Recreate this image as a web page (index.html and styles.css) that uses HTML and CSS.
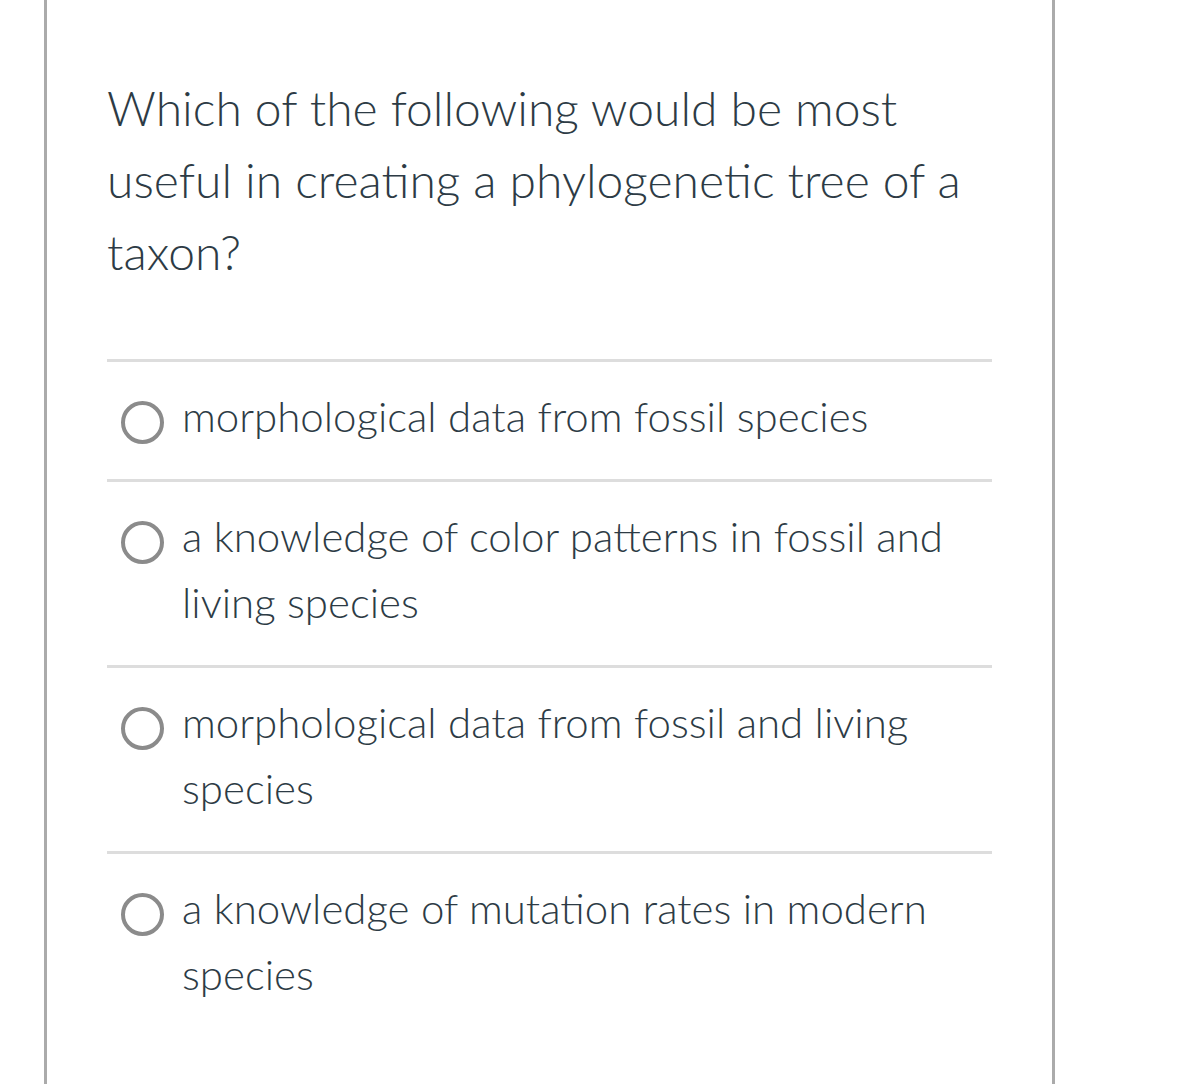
FILE: index.html
```html
<!DOCTYPE html>
<html lang="en">
<head>
<meta charset="utf-8">
<link rel="stylesheet" href="styles.css">
</head>
<body>
<div class="card">
  <div class="question">Which of the following would be most useful in creating a phylogenetic tree of a taxon?</div>
  <div class="answers">
    <div class="answer"><span class="radio"></span><span class="label">morphological data from fossil species</span></div>
    <div class="answer"><span class="radio"></span><span class="label">a knowledge of color patterns in fossil and living species</span></div>
    <div class="answer"><span class="radio"></span><span class="label">morphological data from fossil and living species</span></div>
    <div class="answer"><span class="radio"></span><span class="label">a knowledge of mutation rates in modern species</span></div>
  </div>
</div>
</body>
</html>
```
FILE: styles.css
```css
html, body {
  margin: 0;
  padding: 0;
  background: #ffffff;
}
body {
  font-family: Lato, "Liberation Sans", sans-serif;
  color: #2d3b45;
}
.card {
  margin-left: 44px;
  width: 1011px;
  height: 1084px;
  border-left: 3px solid #ababab;
  border-right: 3px solid #ababab;
  padding: 72px 60px 0 60px;
  box-sizing: border-box;
}
.question {
  font-size: 48px;
  font-weight: 300;
  line-height: 72px;
  padding-right: 20px;
}
.answers {
  margin-top: 71px;
  border-top: 3px solid #dddddd;
}
.answer {
  display: flex;
  align-items: flex-start;
  border-bottom: 3px solid #dddddd;
  padding: 21px 0 30px 14px;
}
.answer:last-child {
  border-bottom: none;
}
.radio {
  flex: none;
  width: 35px;
  height: 35px;
  border: 4px solid #8b8b8b;
  border-radius: 50%;
  margin-top: 18px;
  margin-right: 18px;
  box-sizing: content-box;
}
.label {
  font-size: 42px;
  font-weight: 300;
  line-height: 66px;
  padding-right: 40px;
}
```
